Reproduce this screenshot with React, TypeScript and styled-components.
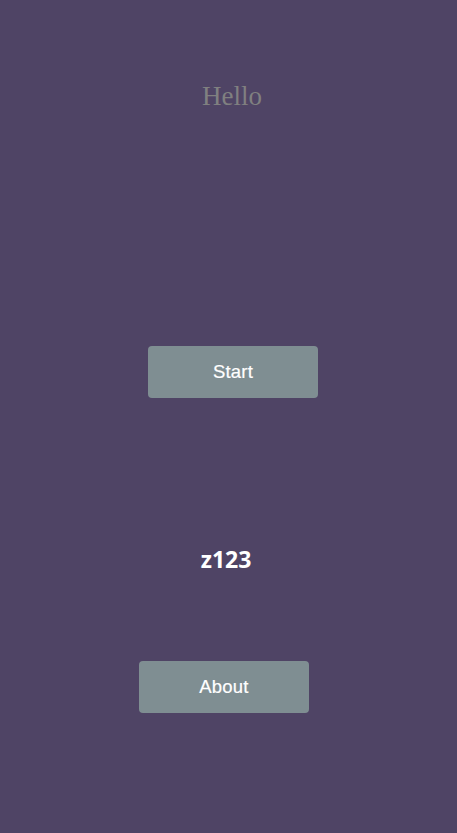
import React from "react";
import styled, { createGlobalStyle } from "styled-components";

const Global = createGlobalStyle`
  html, body { margin: 0; padding: 0; background: #4f4465; }
  #root { min-height: 100vh; }
`;

const Page = styled.div`
  min-height: 833px;
  background: #4f4465;
  display: flex;
  flex-direction: column;
  align-items: center;
`;

const Title = styled.h1`
  margin: 78px 0 0 7px;
  font-family: "Liberation Serif", "Times New Roman", serif;
  font-weight: 400;
  font-size: 27px;
  line-height: 36px;
  color: #808080;
`;

const Button = styled.button<{ $top: number; $shift: number }>`
  margin-top: ${(p) => p.$top}px;
  margin-left: ${(p) => p.$shift}px;
  width: 170px;
  height: 52px;
  border: none;
  border-radius: 4px;
  background: #7f8e92;
  color: #ffffff;
  font-family: "Liberation Sans", Arial, sans-serif;
  font-size: 18.5px;
  letter-spacing: 0.2px;
  -webkit-text-stroke: 0.2px #ffffff;
  cursor: pointer;
`;

const Code = styled.div`
  margin: 146px 0 0 -5px;
  font-family: "Open Sans", "Noto Sans", sans-serif;
  font-weight: 700;
  font-size: 23px;
  line-height: 30px;
  color: #ffffff;
`;

export default function App() {
  return (
    <>
      <Global />
      <Page>
        <Title>Hello</Title>
        <Button $top={232} $shift={9}>Start</Button>
        <Code>z123</Code>
        <Button $top={87} $shift={-9}>About</Button>
      </Page>
    </>
  );
}
